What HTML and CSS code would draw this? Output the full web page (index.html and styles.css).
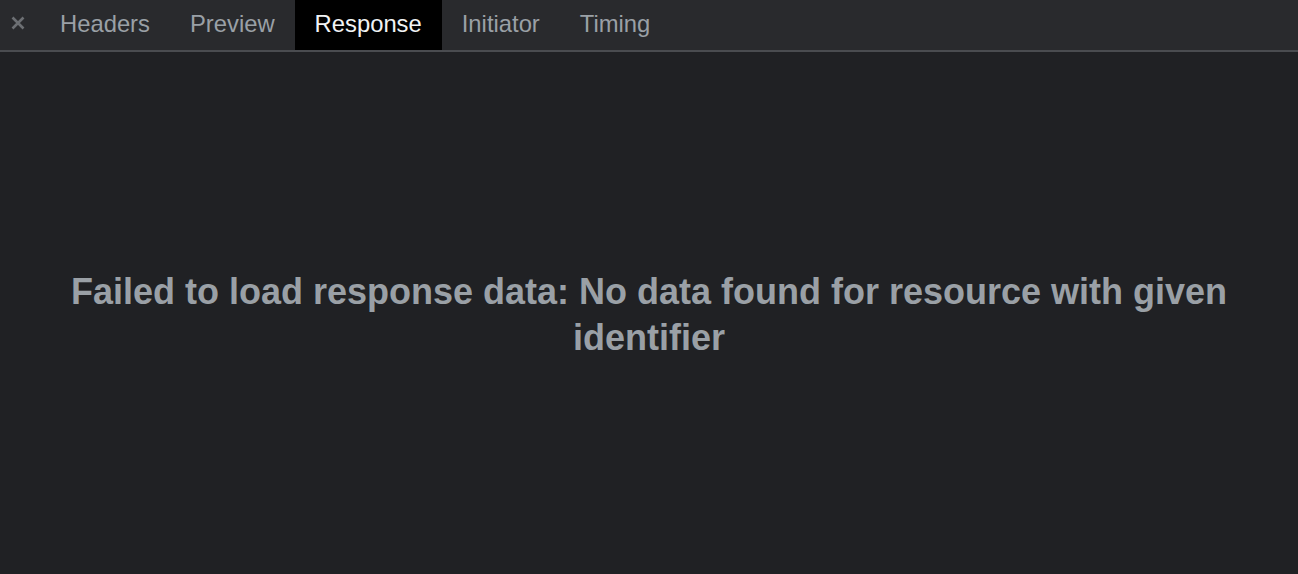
FILE: index.html
```html
<!DOCTYPE html>
<html>
<head>
<meta charset="utf-8">
<link rel="stylesheet" href="styles.css">
</head>
<body>
<div class="panel">
  <div class="tabbar">
    <div class="close">
      <svg width="14" height="14" viewBox="0 0 14 14"><path d="M1.5 1.5 L12.5 12.5 M12.5 1.5 L1.5 12.5" stroke="#6c6f73" stroke-width="2.6" fill="none"/></svg>
    </div>
    <div class="tab">Headers</div>
    <div class="tab">Preview</div>
    <div class="tab active">Response</div>
    <div class="tab">Initiator</div>
    <div class="tab">Timing</div>
  </div>
  <div class="content">
    <div class="message">Failed to load response data: No data found for resource with given identifier</div>
  </div>
</div>
</body>
</html>
```
FILE: styles.css
```css
html, body {
  margin: 0;
  padding: 0;
  height: 100%;
  background: #202124;
  font-family: "Liberation Sans", Arial, Helvetica, sans-serif;
}
.panel {
  display: flex;
  flex-direction: column;
  height: 100%;
}
.tabbar {
  display: flex;
  align-items: stretch;
  height: 50px;
  background: #292a2d;
  border-bottom: 2px solid #4a4c50;
  flex: none;
}
.close {
  width: 40px;
  display: flex;
  align-items: center;
  justify-content: center;
  padding: 0 5px 4px 0;
  box-sizing: border-box;
}
.tab {
  display: flex;
  align-items: center;
  padding: 0 20px 2px;
  font-size: 23.8px;
  color: #9aa0a6;
  white-space: nowrap;
}
.tab.active {
  background: #000000;
  color: #f1f3f4;
}
.content {
  flex: 1;
  display: flex;
  align-items: center;
  justify-content: center;
  padding: 4px 40px 0;
}
.message {
  text-align: center;
  font-weight: bold;
  font-size: 36px;
  line-height: 46px;
  color: #9aa0a6;
  max-width: 1200px;
}
```
